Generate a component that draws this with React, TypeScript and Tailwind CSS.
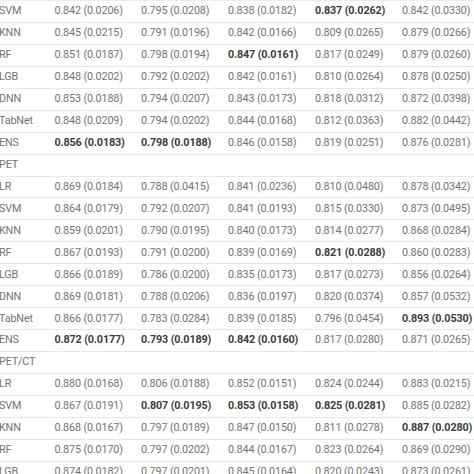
import React from "react";

type Row = { label: string; cells?: string[]; bold?: number[] };

const rows: Row[] = [
  { label: "SVM", cells: ["0.842 (0.0206)", "0.795 (0.0208)", "0.838 (0.0182)", "0.837 (0.0262)", "0.842 (0.0330)"], bold: [3] },
  { label: "KNN", cells: ["0.845 (0.0215)", "0.791 (0.0196)", "0.842 (0.0166)", "0.809 (0.0265)", "0.879 (0.0266)"] },
  { label: "RF", cells: ["0.851 (0.0187)", "0.798 (0.0194)", "0.847 (0.0161)", "0.817 (0.0249)", "0.879 (0.0260)"], bold: [2] },
  { label: "LGB", cells: ["0.848 (0.0202)", "0.792 (0.0202)", "0.842 (0.0161)", "0.810 (0.0264)", "0.878 (0.0250)"] },
  { label: "DNN", cells: ["0.853 (0.0188)", "0.794 (0.0207)", "0.843 (0.0173)", "0.818 (0.0312)", "0.872 (0.0398)"] },
  { label: "TabNet", cells: ["0.848 (0.0209)", "0.794 (0.0202)", "0.844 (0.0168)", "0.812 (0.0363)", "0.882 (0.0442)"] },
  { label: "ENS", cells: ["0.856 (0.0183)", "0.798 (0.0188)", "0.846 (0.0158)", "0.819 (0.0251)", "0.876 (0.0281)"], bold: [0, 1] },
  { label: "PET" },
  { label: "LR", cells: ["0.869 (0.0184)", "0.788 (0.0415)", "0.841 (0.0236)", "0.810 (0.0480)", "0.878 (0.0342)"] },
  { label: "SVM", cells: ["0.864 (0.0179)", "0.792 (0.0207)", "0.841 (0.0193)", "0.815 (0.0330)", "0.873 (0.0495)"] },
  { label: "KNN", cells: ["0.859 (0.0201)", "0.790 (0.0195)", "0.840 (0.0173)", "0.814 (0.0277)", "0.868 (0.0284)"] },
  { label: "RF", cells: ["0.867 (0.0193)", "0.791 (0.0200)", "0.839 (0.0169)", "0.821 (0.0288)", "0.860 (0.0283)"], bold: [3] },
  { label: "LGB", cells: ["0.866 (0.0189)", "0.786 (0.0200)", "0.835 (0.0173)", "0.817 (0.0273)", "0.856 (0.0264)"] },
  { label: "DNN", cells: ["0.869 (0.0181)", "0.788 (0.0206)", "0.836 (0.0197)", "0.820 (0.0374)", "0.857 (0.0532)"] },
  { label: "TabNet", cells: ["0.866 (0.0177)", "0.783 (0.0284)", "0.839 (0.0185)", "0.796 (0.0454)", "0.893 (0.0530)"], bold: [4] },
  { label: "ENS", cells: ["0.872 (0.0177)", "0.793 (0.0189)", "0.842 (0.0160)", "0.817 (0.0280)", "0.871 (0.0265)"], bold: [0, 1, 2] },
  { label: "PET/CT" },
  { label: "LR", cells: ["0.880 (0.0168)", "0.806 (0.0188)", "0.852 (0.0151)", "0.824 (0.0244)", "0.883 (0.0215)"] },
  { label: "SVM", cells: ["0.867 (0.0191)", "0.807 (0.0195)", "0.853 (0.0158)", "0.825 (0.0281)", "0.885 (0.0282)"], bold: [1, 2, 3] },
  { label: "KNN", cells: ["0.868 (0.0167)", "0.797 (0.0189)", "0.847 (0.0150)", "0.811 (0.0278)", "0.887 (0.0280)"], bold: [4] },
  { label: "RF", cells: ["0.875 (0.0170)", "0.797 (0.0202)", "0.844 (0.0167)", "0.823 (0.0264)", "0.869 (0.0290)"] },
  { label: "LGB", cells: ["0.874 (0.0182)", "0.797 (0.0201)", "0.845 (0.0164)", "0.820 (0.0243)", "0.873 (0.0261)"] },
];

export default function App() {
  return (
    <div
      className="w-[474px] h-[474px] overflow-hidden bg-white border-t border-[#ececec] text-[10.8px] tracking-[-0.15px] text-[#737373]"
      style={{ fontFamily: "Roboto, 'Liberation Sans', sans-serif" }}
    >
      {rows.map((r, i) => (
        <div
          key={i}
          className="grid grid-cols-[54.5px_86.5px_87px_87px_87px_1fr] items-center h-[21.95px] border-b-[1.5px] border-[#e8e8e8] whitespace-nowrap"
        >
          <div className="-ml-[1px]">{r.label}</div>
          {r.cells?.map((c, j) => (
            <div
              key={j}
              className={r.bold?.includes(j) ? "font-bold text-[#3d3d3d]" : ""}
            >
              {c}
            </div>
          ))}
        </div>
      ))}
    </div>
  );
}
